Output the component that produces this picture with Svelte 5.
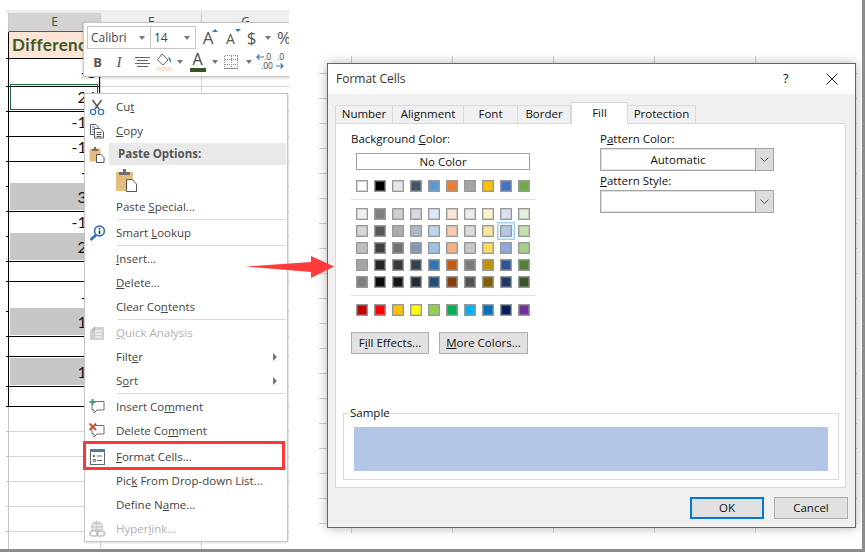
<script>
	// column E values, row by row, below the header row
	const rows = [
		{ v: '-8' }, { v: '24', sel: true }, { v: '-12' }, { v: '-15' }, { v: '-8' },
		{ v: '31', grey: true }, { v: '-14' }, { v: '22', grey: true }, { v: '' }, { v: '-8' },
		{ v: '11', grey: true }, { v: '' }, { v: '13', grey: true }, { v: '' }
	];
	const blankRows = Array(6).fill(0);

	// & marks the underlined access key
	const menu = [
		{ t: 'Cu&t', icon: 'cut' },
		{ t: '&Copy', icon: 'copy' },
		{ t: 'Paste Options:', icon: 'paste', head: true },
		{ big: true },
		{ t: 'Paste &Special...' },
		{ sep: true },
		{ t: 'Smart &Lookup', icon: 'lookup' },
		{ sep: true },
		{ t: '&Insert...' },
		{ t: '&Delete...' },
		{ t: 'Clear Co&ntents' },
		{ sep: true },
		{ t: '&Quick Analysis', icon: 'quick', off: true },
		{ t: 'Filt&er', sub: true },
		{ t: 'S&ort', sub: true },
		{ sep: true },
		{ t: 'Insert Co&mment', icon: 'addnote' },
		{ t: 'Delete Co&mment', icon: 'delnote' },
		{ spacer: true },
		{ t: '&Format Cells...', icon: 'format' },
		{ t: 'Pic&k From Drop-down List...' },
		{ t: 'Define N&ame...' },
		{ t: 'Hyper&link...', icon: 'link', off: true }
	];

	const tabs = ['Number', 'Alignment', 'Font', 'Border', 'Fill', 'Protection'];

	const mainRow = ['#ffffff', '#000000', '#e7e6e6', '#44546a', '#5b9bd5', '#ed7d31', '#a5a5a5', '#ffc000', '#4472c4', '#70ad47'];
	const themeRows = [
		['#f2f2f2', '#7f7f7f', '#d0cece', '#d6dce4', '#deebf6', '#fbe5d5', '#ededed', '#fff2cc', '#d9e2f3', '#e2efd9'],
		['#d8d8d8', '#595959', '#aeabab', '#adb9ca', '#bdd7ee', '#f7cbac', '#dbdbdb', '#fee599', '#b4c6e7', '#c5e0b3'],
		['#bfbfbf', '#3f3f3f', '#757070', '#8496b0', '#9cc3e5', '#f4b183', '#c9c9c9', '#ffd965', '#8eaadb', '#a8d08d'],
		['#a5a5a5', '#262626', '#3a3838', '#323f4f', '#2e75b5', '#c55a11', '#7b7b7b', '#bf9000', '#2f5496', '#538135'],
		['#7f7f7f', '#0c0c0c', '#171616', '#222a35', '#1e4e79', '#833c0b', '#525252', '#7f6000', '#1f3864', '#375623']
	];
	const stdRow = ['#c00000', '#ff0000', '#ffc000', '#ffff00', '#92d050', '#00b050', '#00b0f0', '#0070c0', '#002060', '#7030a0'];
	const selected = '#b4c6e7';

	function parts(s) {
		const i = s.indexOf('&');
		if (i < 0) return [s, '', ''];
		return [s.slice(0, i), s[i + 1], s.slice(i + 2)];
	}
</script>

{#snippet label(s)}
	{@const p = parts(s)}
	{p[0]}<u>{p[1]}</u>{p[2]}
{/snippet}

{#snippet swatch(c)}
	<span class="swatchcell" class:picked={c === selected}>
		<span class="swatch" style="background:{c}"></span>
	</span>
{/snippet}

{#snippet icon(name)}
	{#if name === 'cut'}
		<svg width="16" height="17" viewBox="0 0 16 17" fill="none">
			<path d="M3.5 1 L10 10 M12.5 1 L6 10" stroke="#5a5a5a" stroke-width="1.6" />
			<circle cx="4" cy="13" r="2.6" stroke="#3e79b7" stroke-width="1.4" />
			<circle cx="12" cy="13" r="2.6" stroke="#3e79b7" stroke-width="1.4" />
		</svg>
	{:else if name === 'copy'}
		<svg width="16" height="16" viewBox="0 0 16 16" fill="none" stroke="#5a5a5a">
			<path d="M1.5 1.5 H7 L9 3.5 V5 M1.5 1.5 V11.5 H5" />
			<path d="M3 4 H6 M3 6.5 H5 M3 9 H5" stroke="#3e79b7" />
			<path d="M5.5 5.5 H11 L14.5 9 V15 H5.5 Z" fill="#fff" />
			<path d="M7.5 9.5 H12.5 M7.5 11.5 H12.5 M7.5 13.5 H12.5" />
		</svg>
	{:else if name === 'paste'}
		<svg width="16" height="17" viewBox="0 0 16 17">
			<rect x="0.5" y="2.5" width="11" height="13" fill="#e6bd7c" />
			<path d="M3 3 H9 V5 H3 Z M5 1 H7 V3 H5 Z" fill="#6e6e6e" />
			<path d="M7.5 8.5 H12 L15 11.5 V16.5 H7.5 Z" fill="#fff" stroke="#555" />
		</svg>
	{:else if name === 'lookup'}
		<svg width="17" height="16" viewBox="0 0 17 16" fill="none">
			<circle cx="10.5" cy="6" r="4.9" stroke="#2f6fb0" stroke-width="1.6" fill="#fff" />
			<path d="M7 10 L1.5 15" stroke="#2f6fb0" stroke-width="2.6" />
			<path d="M10.5 3 V4.4 M10.5 5.4 V9" stroke="#333" stroke-width="1.6" />
		</svg>
	{:else if name === 'quick'}
		<svg width="16" height="15" viewBox="0 0 16 15">
			<path d="M5 1 H15 V14 H1 V6 Z" fill="#d0d0d0" />
			<path d="M6 5 H13 M6 8 H13 M6 11 H13" stroke="#fff" />
			<path d="M6 0 L1 5 H6 Z" fill="#bdbdbd" />
		</svg>
	{:else if name === 'addnote' || name === 'delnote'}
		<svg width="16" height="16" viewBox="0 0 16 16" fill="none">
			<path d="M4.5 2.5 H15 V11 H8 L5 14 V11 H3 V6" stroke="#6e6e6e" />
			{#if name === 'addnote'}
				<path d="M3.5 0 V6 M0.5 3 H6.5" stroke="#3f9a76" stroke-width="2" />
			{:else}
				<path d="M0.5 0.5 L7 7 M7 0.5 L0.5 7" stroke="#d4412c" stroke-width="1.8" />
			{/if}
		</svg>
	{:else if name === 'format'}
		<svg width="15" height="16" viewBox="0 0 15 16" fill="none">
			<rect x="0.5" y="0.5" width="14" height="15" fill="#fff" stroke="#666" />
			<rect x="0" y="0" width="15" height="3" fill="#4f78ad" />
			<rect x="3" y="6" width="2" height="2" fill="#666" />
			<rect x="3.5" y="10.5" width="2" height="2" stroke="#666" stroke-width="0.8" />
			<path d="M7 7 H12 M7 11.5 H12" stroke="#666" />
		</svg>
	{:else if name === 'link'}
		<svg width="17" height="16" viewBox="0 0 17 16" fill="none" stroke="#c4c4c4">
			<circle cx="8" cy="6" r="5.5" fill="#e8e8e8" />
			<path d="M2.5 6 H13.5 M8 0.5 V11.5 M4 2.5 H12 M4 9 H12" />
			<rect x="1" y="10" width="8" height="5" rx="2.5" stroke-width="1.6" fill="#fff" />
			<rect x="7.5" y="10" width="8" height="5" rx="2.5" stroke-width="1.6" />
		</svg>
	{/if}
{/snippet}

<div class="page">
	<!-- left pane: the worksheet with the mini toolbar and the right-click menu -->
	<div class="sheet">
		<div class="colheads">
			<div class="ch active">E</div>
			<div class="ch">F</div>
			<div class="ch">G</div>
		</div>
		<div class="row">
			<div class="cell e title">Difference</div>
			<div class="cell"></div>
			<div class="cell"></div>
		</div>
		{#each rows as r}
			<div class="row">
				<div class="cell e" class:grey={r.grey} class:sel={r.sel}>{r.v}</div>
				<div class="cell"></div>
				<div class="cell"></div>
			</div>
		{/each}
		{#each blankRows as _}
			<div class="row">
				<div class="cell plain"></div>
				<div class="cell"></div>
				<div class="cell"></div>
			</div>
		{/each}

		<div class="toolbar">
			<div class="tbrow first">
				<div class="combo fontbox"><span>Calibri</span><i class="caret"></i></div>
				<div class="combo sizebox"><span>14</span><i class="caret"></i></div>
				<div class="tb w22 big">A<i class="up"></i></div>
				<div class="tb w23 mid">A<i class="down"></i></div>
				<div class="tb w19 money">$</div>
				<div class="tb w13"><i class="caret"></i></div>
				<div class="tb w20 money">%</div>
			</div>
			<div class="tbrow">
				<div class="tb w21 bold">B</div>
				<div class="tb w22 ital">I</div>
				<div class="tb w24">
					<svg width="15" height="11" viewBox="0 0 15 11" stroke="#666"><path d="M0 .5H15M2 3.5H13M0 6.5H15M2 9.5H13" /></svg>
				</div>
				<div class="tb w20">
					<svg width="17" height="18" viewBox="0 0 17 18" fill="none">
						<path d="M6 1 L12 7 L7 12 L1.5 7 Z" stroke="#666" fill="#fff" />
						<path d="M12 4 C15 5 15.5 8 15 10 L13 7 Z" fill="#3e79b7" />
						<rect x="0" y="14" width="16" height="4" fill="#fce4d6" />
					</svg>
				</div>
				<div class="tb w12"><i class="caret"></i></div>
				<div class="tb w23 fontcolor">A<b></b></div>
				<div class="tb w11"><i class="caret"></i></div>
				<div class="tb w22">
					<svg width="14" height="14" viewBox="0 0 14 14" fill="none" stroke="#8a8a8a" stroke-dasharray="1 1" shape-rendering="crispEdges"><path d="M.5 .5H13.5M.5 4.5H13.5M.5 9.5H13.5M.5 .5V13.5M7.5 .5V13.5M13.5 .5V13.5" /><path d="M0 13.5H14" stroke-dasharray="none" /></svg>
				</div>
				<div class="tb w13"><i class="caret"></i></div>
				<div class="tb w20 dec">
					<svg width="8" height="6" viewBox="0 0 8 6" fill="none" stroke="#3e79b7" stroke-width="1.2"><path d="M8 3H1M3.5 .5L1 3L3.5 5.5" /></svg>
					<span class="top">.0</span><span class="bottom">.00</span>
				</div>
				<div class="tb w20 dec two">
					<span class="top">.0</span>
					<svg width="8" height="6" viewBox="0 0 8 6" fill="none" stroke="#3e79b7" stroke-width="1.2"><path d="M0 3H7M4.5 .5L7 3L4.5 5.5" /></svg>
				</div>
			</div>
		</div>

		<div class="menu">
			{#each menu as m}
				{#if m.sep}
					<div class="sep"></div>
				{:else if m.spacer}
					<div class="spacer"></div>
				{:else if m.big}
					<div class="bigpaste">
						<svg width="21" height="23" viewBox="0 0 21 23">
							<rect x="0" y="3" width="17" height="19" fill="#e6bd7c" />
							<path d="M3 3 H14 V6 H3 Z M7 0 H10 V3 H7 Z" fill="#6e6e6e" />
							<path d="M10.5 10.5 H16 L20.5 15 V22.5 H10.5 Z" fill="#fff" stroke="#555" />
						</svg>
					</div>
				{:else}
					<div class="item" class:off={m.off} class:head={m.head}>
						<span class="ic">{#if m.icon}{@render icon(m.icon)}{/if}</span>
						<span class="txt">{@render label(m.t)}</span>
						{#if m.sub}<i class="subarrow"></i>{/if}
					</div>
				{/if}
			{/each}
		</div>
		<div class="redbox"></div>
	</div>

	<!-- right pane: faint worksheet behind the dialog -->
	<div class="backsheet">
		<div class="dialog">
			<div class="titlebar">
				<span class="dtitle">Format Cells</span>
				<span class="help">?</span>
				<svg class="close" width="12" height="12" viewBox="0 0 12 12" stroke="#222" fill="none"><path d="M.5 .5L11.5 11.5M11.5 .5L.5 11.5" /></svg>
			</div>
			<div class="body">
				<div class="tabs">
					{#each tabs as t}
						<div class="tab tab-{t.toLowerCase()}" class:on={t === 'Fill'}>{t}</div>
					{/each}
				</div>
				<div class="panel">
					<div class="cols">
						<div class="left">
							<div class="lbl">{@render label('Background &Color:')}</div>
							<div class="nocolor">No Color</div>
							<div class="swrow first">
								{#each mainRow as c}{@render swatch(c)}{/each}
							</div>
							<div class="rule"></div>
							<div class="swgrid">
								{#each themeRows as row}
									<div class="swrow">
										{#each row as c}{@render swatch(c)}{/each}
									</div>
								{/each}
							</div>
							<div class="rule"></div>
							<div class="swrow">
								{#each stdRow as c}{@render swatch(c)}{/each}
							</div>
							<div class="btns">
								<div class="btn fill">{@render label('F&ill Effects...')}</div>
								<div class="btn more">{@render label('&More Colors...')}</div>
							</div>
						</div>
						<div class="right">
							<div class="lbl">{@render label('P&attern Color:')}</div>
							<div class="select">
								<span class="val">Automatic</span>
								<span class="drop"><svg width="9" height="5" viewBox="0 0 9 5" fill="none" stroke="#555"><path d="M.5 .5L4.5 4.5L8.5 .5" /></svg></span>
							</div>
							<div class="lbl second">{@render label('&Pattern Style:')}</div>
							<div class="select">
								<span class="val"></span>
								<span class="drop"><svg width="9" height="5" viewBox="0 0 9 5" fill="none" stroke="#555"><path d="M.5 .5L4.5 4.5L8.5 .5" /></svg></span>
							</div>
						</div>
					</div>
					<fieldset class="sample">
						<legend>Sample</legend>
						<div class="samplefill"></div>
					</fieldset>
				</div>
				<div class="footer">
					<div class="btn ok">OK</div>
					<div class="btn cancel">Cancel</div>
				</div>
			</div>
		</div>
	</div>

	<svg class="arrow" width="88" height="24" viewBox="0 0 88 24">
		<path d="M0 11.5 L65 7 V1 L88 11.5 L65 23 V17 Z" fill="#ff3b3b" />
	</svg>
</div>

<style>
	:global(body) {
		margin: 0;
		background: #fff;
	}
	.page {
		position: relative;
		display: flex;
		align-items: flex-start;
		box-sizing: border-box;
		width: 865px;
		height: 552px;
		overflow: hidden;
		background: #fff;
		border-right: 3px solid #8c8c8c;
		border-bottom: 3px solid #8c8c8c;
		font-family: "Open Sans", "Noto Sans", sans-serif;
		font-size: 11.5px;
		color: #222;
	}

	/* worksheet */
	.sheet {
		position: relative;
		flex: none;
		box-sizing: border-box;
		width: 283px;
		height: 539px;
		margin: 10px 0 0 6px;
		padding-left: 2px;
		overflow: hidden;
		background: #fff;
		border-top: 3px solid #ececec;
	}
	.colheads {
		display: grid;
		grid-template-columns: 92px 101px 88px;
		height: 19px;
	}
	.ch {
		text-align: center;
		font-size: 12px;
		line-height: 18px;
		color: #444;
		background: #f0f0f0;
		border-left: 1px solid #c8c8c8;
	}
	.ch.active {
		background: #d3d3d3;
		border-bottom: 2px solid #217346;
		box-sizing: border-box;
		color: #1f5c38;
	}
	.row {
		display: grid;
		grid-template-columns: 92px 101px 88px;
		height: 25px;
	}
	.cell {
		position: relative;
		box-sizing: border-box;
		border-bottom: 1px solid #d4d4d4;
		border-left: 1px solid #d4d4d4;
	}
	.cell.plain {
		border-left-color: #c4c4c4;
	}
	.cell.plain::before,
	.cell.e::before {
		content: '';
		position: absolute;
		left: -3px;
		bottom: -1px;
		width: 2px;
		height: 1px;
		background: #c4c4c4;
	}
	.cell.e::before {
		background: #000;
	}
	.cell.e {
		border-bottom: 1px solid #000;
		border-left: 1px solid #000;
		border-right: 1px solid #000;
		padding-right: 3px;
		text-align: right;
		font-family: Lato, "Open Sans", sans-serif;
		font-size: 16px;
		line-height: 29px;
		color: #111;
	}
	.cell.grey {
		background: #c6c6c6;
		box-shadow: inset 0 0 0 1px #fff;
	}
	.cell.sel {
		outline: 1px solid #1a6b3f;
		outline-offset: -3px;
	}
	.cell.title {
		padding: 0 0 0 3px;
		background: #fce4d6;
		text-align: left;
		font-weight: 700;
		font-size: 17px;
		line-height: 26px;
		letter-spacing: 0.4px;
		white-space: nowrap;
		color: #3b5a26;
	}

	/* mini toolbar */
	.toolbar {
		position: absolute;
		left: 77px;
		top: 9px;
		box-sizing: border-box;
		width: 230px;
		height: 55px;
		padding: 3px 0 0 3px;
		background: #fff;
		border: 1px solid #c6c6c6;
		box-shadow: 0 1px 3px rgba(0, 0, 0, 0.2);
	}
	.tbrow {
		display: flex;
		align-items: center;
		height: 22px;
		margin-top: 2px;
	}
	.tbrow.first {
		height: 23px;
		margin-top: 0;
	}
	.combo {
		display: flex;
		align-items: center;
		justify-content: space-between;
		box-sizing: border-box;
		height: 23px;
		padding: 0 5px 0 3px;
		border: 1px solid #c6c6c6;
		font-size: 12px;
		color: #444;
	}
	.fontbox {
		width: 64px;
	}
	.sizebox {
		width: 46px;
		margin-left: -1px;
		margin-right: 1px;
	}
	.caret {
		display: block;
		width: 0;
		height: 0;
		border-left: 3.5px solid transparent;
		border-right: 3.5px solid transparent;
		border-top: 4px solid #777;
	}
	.tb {
		position: relative;
		display: flex;
		flex: none;
		align-items: center;
		justify-content: center;
		height: 100%;
		color: #555;
	}
	.w11 { width: 11px; }
	.w12 { width: 12px; }
	.w13 { width: 13px; }
	.w19 { width: 19px; }
	.w20 { width: 20px; }
	.w21 { width: 21px; }
	.w22 { width: 22px; }
	.w23 { width: 23px; }
	.w24 { width: 24px; }
	.big {
		font-size: 17px;
	}
	.mid {
		font-size: 14px;
		padding-top: 2px;
		box-sizing: border-box;
	}
	.up, .down {
		position: absolute;
		right: 1px;
		width: 0;
		height: 0;
		border-left: 3px solid transparent;
		border-right: 3px solid transparent;
	}
	.up {
		top: 3px;
		border-bottom: 3px solid #3e79b7;
	}
	.down {
		top: 3px;
		border-top: 3px solid #3e79b7;
	}
	.money {
		font-size: 17px;
	}
	.bold {
		font-weight: 700;
		font-size: 13px;
	}
	.ital {
		font-family: "Liberation Serif", serif;
		font-style: italic;
		font-size: 15px;
	}
	.fontcolor {
		flex-direction: column;
		justify-content: flex-start;
		font-size: 16px;
		line-height: 17px;
		color: #444;
	}
	.fontcolor b {
		width: 16px;
		height: 4px;
		background: #375623;
	}
	.dec {
		font-size: 8.5px;
		line-height: 8px;
		color: #444;
	}
	.dec .top {
		position: absolute;
		left: 9px;
		top: 2px;
	}
	.dec .bottom {
		position: absolute;
		left: 6px;
		top: 11px;
	}
	.dec svg {
		position: absolute;
		left: 1px;
		top: 3px;
	}
	.dec.two .top {
		left: 2px;
	}
	.dec.two svg {
		top: 12px;
		left: 1px;
	}

	/* right-click menu */
	.menu {
		position: absolute;
		left: 78px;
		top: 80px;
		box-sizing: border-box;
		width: 204px;
		height: 449px;
		padding: 1px 0 0;
		background: #fff;
		border: 1px solid #c6c6c6;
		box-shadow: 1px 1px 2px rgba(0, 0, 0, 0.15);
		color: #444;
		font-size: 11.5px;
	}
	.item {
		position: relative;
		display: flex;
		align-items: center;
		height: 24px;
	}
	.item.off {
		color: #b1b1b1;
	}
	.ic {
		display: flex;
		flex: none;
		align-items: center;
		justify-content: center;
		width: 24px;
	}
	.txt {
		padding: 0 0 2px 7px;
		white-space: nowrap;
	}
	.item.head {
		height: 22px;
	}
	.item.head .txt {
		flex: 1;
		margin-right: 1px;
		padding: 0 0 0 9px;
		background: #e9e9e9;
		font-weight: 700;
		line-height: 22px;
		color: #555;
	}
	.bigpaste {
		display: flex;
		align-items: center;
		height: 30px;
		padding-left: 31px;
	}
	.sep {
		height: 1px;
		margin: 0 1px 1px 32px;
		background: #dcdcdc;
	}
	.spacer {
		height: 2px;
	}
	.subarrow {
		position: absolute;
		right: 10px;
		top: 8px;
		width: 0;
		height: 0;
		border-top: 4px solid transparent;
		border-bottom: 4px solid transparent;
		border-left: 4px solid #777;
	}
	.redbox {
		position: absolute;
		left: 77px;
		top: 428px;
		box-sizing: border-box;
		width: 202px;
		height: 29px;
		border: 3px solid #ff3636;
	}

	/* sheet behind the dialog */
	.backsheet {
		position: relative;
		flex: none;
		width: 538px;
		height: 477px;
		margin: 56px 0 0 30px;
		background:
			repeating-linear-gradient(90deg, transparent 0 100px, #cfcfcf 100px 101px) -68px 0,
			repeating-linear-gradient(180deg, transparent 0 24px, #cfcfcf 24px 25px) 0 -7px,
			#fff;
	}
	.dialog {
		position: absolute;
		left: 8px;
		top: 7px;
		display: flex;
		flex-direction: column;
		box-sizing: border-box;
		width: 529px;
		height: 465px;
		background: #f0f0f0;
		border: 1px solid #1979ca;
		box-shadow: 0 0 10px rgba(0, 0, 0, 0.3);
		font-size: 11.5px;
		color: #111;
	}
	.titlebar {
		position: relative;
		display: flex;
		align-items: center;
		box-sizing: border-box;
		height: 30px;
		padding: 0 0 2px 8px;
		background: #fff;
	}
	.dtitle {
		color: #333;
		font-size: 12px;
	}
	.help {
		position: absolute;
		left: 455px;
		top: 5px;
		font-size: 13px;
	}
	.close {
		position: absolute;
		left: 498px;
		top: 9px;
	}
	.body {
		display: flex;
		flex: 1;
		flex-direction: column;
		min-height: 0;
	}
	.tabs {
		display: flex;
		align-items: flex-end;
		height: 29px;
		margin-left: 7px;
	}
	.tab {
		position: relative;
		box-sizing: border-box;
		height: 19px;
		margin-bottom: -1px;
		border: 1px solid #d9d9d9;
		border-bottom: 0;
		border-left-width: 0;
		text-align: center;
		line-height: 16px;
	}
	.tab-number { width: 58px; border-left-width: 1px; }
	.tab-alignment { width: 71px; }
	.tab-font { width: 54px; }
	.tab-border { width: 53px; }
	.tab-fill { width: 57px; }
	.tab-protection { width: 68px; }
	.tab.on {
		z-index: 1;
		height: 22px;
		background: #fff;
		border-left-width: 1px;
		line-height: 20px;
	}
	.panel {
		display: flex;
		flex: none;
		flex-direction: column;
		box-sizing: border-box;
		width: 511px;
		height: 365px;
		margin-left: 7px;
		padding: 7px 6px 7px 7px;
		background: #fff;
		border: 1px solid #d9d9d9;
	}
	.cols {
		display: flex;
		padding-left: 8px;
	}
	.left {
		width: 184px;
	}
	.lbl {
		height: 16px;
		line-height: 16px;
	}
	.nocolor {
		box-sizing: border-box;
		width: 174px;
		height: 17px;
		margin: 6px 0 10px 5px;
		border: 1px solid #a0a0a0;
		text-align: center;
		line-height: 15px;
	}
	.swrow {
		display: flex;
		gap: 6px;
		margin-left: 5px;
	}
	.swgrid {
		display: flex;
		flex-direction: column;
		gap: 5px;
	}
	.swatchcell {
		position: relative;
		display: block;
		width: 12px;
		height: 12px;
	}
	.swatch {
		display: block;
		box-sizing: border-box;
		width: 12px;
		height: 12px;
		border: 1px solid #999;
		box-shadow: inset 0 0 0 1px rgba(160, 160, 160, 0.45);
	}
	.picked::before {
		content: '';
		position: absolute;
		inset: -3px;
		border: 1px solid #9ad0f8;
		box-shadow: inset 0 0 0 1px #cfe8fb;
		background: #eaf5fe;
	}
	.picked .swatch {
		position: relative;
	}
	.rule {
		height: 1px;
		margin: 7px 0 8px;
		background: #e0e0e4;
	}
	.btns {
		display: flex;
		gap: 10px;
		margin-top: 16px;
	}
	.btn {
		box-sizing: border-box;
		height: 22px;
		background: #e1e1e1;
		border: 1px solid #adadad;
		text-align: center;
		line-height: 20px;
	}
	.btn.fill { width: 78px; }
	.btn.more { width: 89px; }
	.right {
		width: 174px;
		margin-left: 65px;
	}
	.right .lbl.second {
		margin-top: 2px;
	}
	.select {
		display: flex;
		box-sizing: border-box;
		width: 174px;
		height: 23px;
		margin-top: 1px;
		border: 1px solid #a5a5a5;
		box-shadow: inset 0 0 0 1px rgba(165, 165, 165, 0.35);
	}
	.val {
		flex: 1;
		text-align: center;
		line-height: 21px;
	}
	.drop {
		display: flex;
		align-items: center;
		justify-content: center;
		width: 17px;
		background: #dcdcdc;
		border-left: 1px solid #a5a5a5;
	}
	.sample {
		min-width: 0;
		margin: auto 0 0;
		padding: 7px 10px 8px;
		border: 1px solid #dcdcdc;
	}
	.sample legend {
		margin-left: -5px;
		padding: 0 1px;
		line-height: 14px;
	}
	.samplefill {
		height: 44px;
		background: #b4c6e7;
	}
	.footer {
		display: flex;
		justify-content: flex-end;
		gap: 10px;
		margin: 9px 7px 0 0;
	}
	.btn.ok {
		width: 74px;
		border: 2px solid #0078d7;
		line-height: 18px;
	}
	.btn.cancel {
		width: 74px;
	}

	.arrow {
		position: absolute;
		left: 246px;
		top: 255px;
	}
</style>
